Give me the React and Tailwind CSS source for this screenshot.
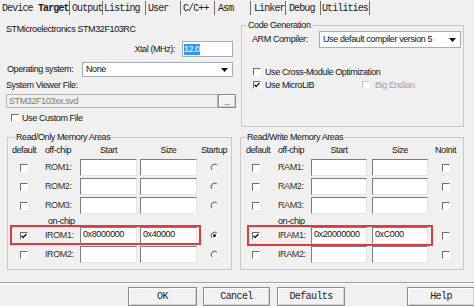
const tabs = [
  { label: 'Device', cls: 'w-[36px] pl-[2px]' },
  { label: 'Target', cls: 'w-[33px] pl-[2px] font-bold' },
  { label: 'Output', cls: 'w-[33px] pl-[2px] border-l border-[#707070]' },
  { label: 'Listing', cls: 'w-[43px] pl-[1px] border-l border-[#707070]' },
  { label: 'User', cls: 'w-[35px] pl-[2px] border-l border-[#707070]' },
  { label: 'C/C++', cls: 'w-[34px] pl-[2px] border-l border-[#707070]' },
  { label: 'Asm', cls: 'w-[36px] pl-[3px] border-l border-[#707070]' },
  { label: 'Linker', cls: 'w-[35px] pl-[3px] border-l border-[#707070]' },
  { label: 'Debug', cls: 'w-[35px] pl-[3px] border-l border-[#707070]' },
  { label: 'Utilities', cls: 'w-[50px] pl-[1px] border-x border-[#707070]' },
]

function Check({ checked, disabled }) {
  return (
    <span className={`flex h-[8px] w-[8px] flex-none items-center justify-center border bg-white border-r-white border-b-white ${disabled ? 'border-t-[#c4c4c4] border-l-[#c4c4c4]' : 'border-t-[#6e6e6e] border-l-[#6e6e6e]'}`}>
      {checked && (
        <svg width="6" height="6" viewBox="0 0 6 6">
          <path d="M0.6 2.8 L2.2 4.6 L5.4 0.8" stroke="#000" strokeWidth="1.3" fill="none" />
        </svg>
      )}
    </span>
  )
}

function Radio({ on }) {
  return (
    <svg width="9" height="9" viewBox="0 0 9 9">
      <path d="M6.97 2.03 A3.5 3.5 0 0 0 2.03 6.97" stroke="#555" strokeWidth="1" fill="none" />
      <path d="M2.03 6.97 A3.5 3.5 0 0 0 6.97 2.03" stroke="#ffffff" strokeWidth="1" fill="none" />
      {on && <circle cx="4.5" cy="4.5" r="1.5" fill="#111" />}
    </svg>
  )
}

function Arrow() {
  return (
    <svg width="7" height="4" viewBox="0 0 7 4">
      <polygon points="0,0 7,0 3.5,4" fill="#111" />
    </svg>
  )
}

const field = 'h-[17px] w-[57px] flex-none bg-white border border-t-[#7d7d7d] border-l-[#7d7d7d] border-r-[#e6e6e6] border-b-[#e6e6e6] pl-[2px] pt-[1px]'
const field2 = 'h-[17px] w-[56px] flex-none bg-white border border-t-[#7d7d7d] border-l-[#7d7d7d] border-r-[#e6e6e6] border-b-[#e6e6e6] pl-[2px] pt-[1px]'
const btn = 'flex h-[19px] flex-none items-center justify-center border border-[#8c8c8c] bg-[#f2f2f2] shadow-[inset_1px_1px_0_#fff,inset_-1px_-1px_0_#cfcfcf]'

function RoRow({ label, checked, start, size, radio, red }) {
  return (
    <div className="relative flex h-[17px] items-center">
      <div className="flex w-[32px] justify-center"><Check checked={checked} /></div>
      <div className="w-[40px] pl-[5px] text-[#333]">{label}</div>
      <div className={field}>{start}</div>
      <div className={`${field} ml-[3px]`}>{size}</div>
      <div className="flex w-[34px] justify-center"><Radio on={radio} /></div>
      {red && <div className="pointer-events-none absolute left-[2px] top-[-2px] h-[20px] w-[191px] border-2 border-[#dc3b42]" />}
    </div>
  )
}

function RwRow({ label, checked, start, size, red }) {
  return (
    <div className="relative flex h-[17px] items-center">
      <div className="flex w-[29px] justify-center"><Check checked={checked} /></div>
      <div className="w-[41px] pl-[8px] text-[#333]">{label}</div>
      <div className={field2}>{start}</div>
      <div className={`${field2} ml-[5px]`}>{size}</div>
      <div className="flex w-[35px] justify-center"><Check /></div>
      {red && <div className="pointer-events-none absolute left-[6px] top-[-2px] h-[21px] w-[186px] border-2 border-[#dc3b42]" />}
    </div>
  )
}

export default function App() {
  return (
    <div className="h-[306px] w-[474px] overflow-hidden bg-[#f0f0f0] font-['Liberation_Sans',Arial,sans-serif] text-[9px] leading-[11px] tracking-[-0.4px] text-[#141414] select-none">
      {/* tabs */}
      <div className="flex h-[17px] font-['Liberation_Mono','Courier_New',monospace] text-[10px] tracking-[-0.9px] text-[#1c1c1c]">
        {tabs.map(t => (
          <div key={t.label} className={`mt-[1px] flex h-[14px] flex-none items-center whitespace-nowrap ${t.cls}`}>{t.label}</div>
        ))}
      </div>

      {/* top section */}
      <div className="flex h-[114px]">
        <div className="flex w-[237px] flex-none flex-col">
          <div className="mt-[7px] pl-[6px]">STMicroelectronics STM32F103RC</div>
          <div className="mt-[6px] flex items-center justify-end gap-[7px] pr-[4px]">
            <span>Xtal (MHz):</span>
            <div className="flex h-[16px] w-[51px] items-center border border-[#a5acb5] bg-white pl-[1px]">
              <span className="bg-[#3399ff] text-white">12.0</span>
            </div>
          </div>
          <div className="mt-[5px] flex h-[15px] items-center">
            <span className="w-[82px] pl-[7px]">Operating system:</span>
            <div className="flex h-[15px] w-[151px] items-center justify-between border border-[#a5acb5] bg-white pl-[3px] pr-[4px]">
              <span>None</span>
              <Arrow />
            </div>
          </div>
          <div className="mt-[3px] pl-[6px]">System Viewer File:</div>
          <div className="mt-[3px] flex h-[14px] pl-[6px]">
            <div className="flex w-[212px] items-center border border-[#b5b5b5] pl-[2px] text-[#7a7a7a]">STM32F103xx.svd</div>
            <div className={`${btn} !h-[14px] w-[18px] items-end text-[8px] leading-[8px]`}>...</div>
          </div>
          <div className="mt-[5px] flex h-[10px] items-center gap-[3px] pl-[11px]">
            <Check />
            <span>Use Custom File</span>
          </div>
        </div>

        <div className="flex-1">
          <div className="relative ml-[4px] mt-[8px] h-[102px] w-[223px] border border-[#c8c8c8]">
            <span className="absolute left-[5px] top-[-6px] bg-[#f0f0f0] px-[1px]">Code Generation</span>
            <div className="mt-[5px] flex h-[17px] items-center pl-[10px]">
              <span className="w-[67px]">ARM Compiler:</span>
              <div className="flex h-[17px] w-[142px] items-center justify-between border border-[#a5acb5] bg-white pl-[3px] pr-[4px]">
                <span>Use default compiler version 5</span>
                <Arrow />
              </div>
            </div>
            <div className="mt-[19px] flex h-[10px] items-center gap-[4px] pl-[11px]">
              <Check />
              <span>Use Cross-Module Optimization</span>
            </div>
            <div className="mt-[3px] flex h-[10px] items-center pl-[11px]">
              <div className="flex w-[109px] items-center gap-[4px]">
                <Check checked />
                <span>Use MicroLIB</span>
              </div>
              <div className="flex items-center gap-[5px] text-[#a3a3a3]">
                <Check disabled />
                <span>Big Endian</span>
              </div>
            </div>
          </div>
        </div>
      </div>

      {/* memory areas */}
      <div className="mt-[6px] flex">
        <div className="relative ml-[7px] h-[133px] w-[225px] border border-[#c8c8c8]">
          <span className="absolute left-[7px] top-[-6px] bg-[#f0f0f0] px-[1px]">Read/Only Memory Areas</span>
          <div className="mt-[7px] flex">
            <span className="w-[32px] text-center">default</span>
            <span className="w-[40px] pl-[5px]">off-chip</span>
            <span className="w-[57px] text-center">Start</span>
            <span className="ml-[3px] w-[57px] text-center">Size</span>
            <span className="w-[34px] text-center">Startup</span>
          </div>
          <div className="mt-[3px] flex flex-col gap-[2px]">
            <RoRow label="ROM1:" />
            <RoRow label="ROM2:" />
            <RoRow label="ROM3:" />
          </div>
          <div className="mt-[2px] pl-[40px]">on-chip</div>
          <div className="flex flex-col gap-[2px]">
            <RoRow label="IROM1:" checked start="0x8000000" size="0x40000" radio red />
            <RoRow label="IROM2:" />
          </div>
        </div>

        <div className="relative ml-[8px] h-[133px] w-[224px] border border-[#c8c8c8]">
          <span className="absolute left-[5px] top-[-6px] bg-[#f0f0f0] px-[1px]">Read/Write Memory Areas</span>
          <div className="mt-[7px] flex">
            <span className="w-[34px] text-center">default</span>
            <span className="w-[36px] pl-[3px]">off-chip</span>
            <span className="w-[56px] text-center">Start</span>
            <span className="ml-[5px] w-[56px] text-center">Size</span>
            <span className="w-[35px] text-center">NoInit</span>
          </div>
          <div className="mt-[3px] flex flex-col gap-[2px]">
            <RwRow label="RAM1:" />
            <RwRow label="RAM2:" />
            <RwRow label="RAM3:" />
          </div>
          <div className="mt-[2px] pl-[37px]">on-chip</div>
          <div className="flex flex-col gap-[2px]">
            <RwRow label="IRAM1:" checked start="0x20000000" size="0xC000" red />
            <RwRow label="IRAM2:" />
          </div>
        </div>
      </div>

      {/* separator + buttons */}
      <div className="mt-[12px] h-[1px] bg-[#a0a0a0]" />
      <div className="h-[1px] bg-white" />
      <div className="mt-[3px] flex font-['Liberation_Mono','Courier_New',monospace] text-[10px] tracking-[-0.6px] text-[#1c1c1c]">
        <div className={`${btn} ml-[128px] w-[69px]`}>OK</div>
        <div className={`${btn} ml-[6px] w-[67px]`}>Cancel</div>
        <div className={`${btn} ml-[7px] w-[68px]`}>Defaults</div>
        <div className={`${btn} ml-[62px] w-[68px]`}>Help</div>
      </div>
    </div>
  )
}
